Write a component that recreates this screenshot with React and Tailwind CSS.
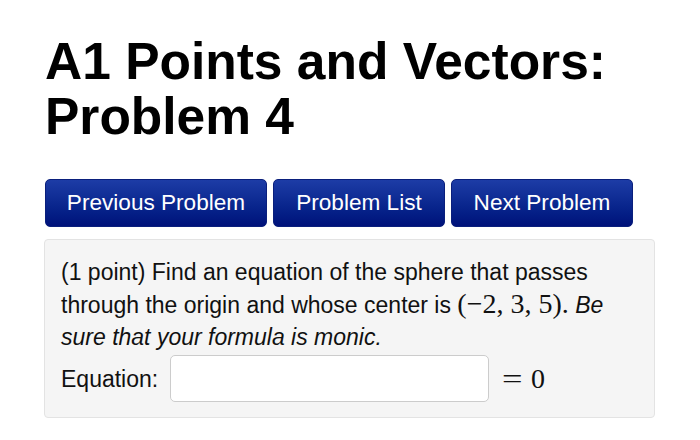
import React from "react";

const sans = { fontFamily: '"Liberation Sans", Arial, sans-serif' };
const serif = { fontFamily: '"Liberation Serif", "Times New Roman", serif' };

function NavButton({ width, children }) {
  return (
    <button
      className={`${width} h-[48px] rounded-[5px] border border-[#0a1f7c] bg-gradient-to-b from-[#1d3ca6] to-[#00117a] text-white text-[22.6px] leading-none`}
    >
      {children}
    </button>
  );
}

function App() {
  return (
    <div className="w-[700px] h-[440px] bg-white text-black overflow-hidden" style={sans}>
      <div className="pl-[45px] pr-[45px] pt-[34px]">
        <h1 className="font-bold text-[51.5px] leading-[55px]">
          A1 Points and Vectors:
          <br />
          Problem 4
        </h1>

        <div className="flex gap-[6px] mt-[35px]">
          <NavButton width="w-[222px]">Previous Problem</NavButton>
          <NavButton width="w-[172px]">Problem List</NavButton>
          <NavButton width="w-[182px]">Next Problem</NavButton>
        </div>

        <div className="mt-[12px] w-[611px] ml-[-1px] bg-[#f5f5f5] border border-[#e3e3e3] rounded-[4px] pl-[16px] pr-[14px] pt-[16px] pb-[15px] text-[23px] leading-[32px] text-[#111]">
          <p>
            (1 point) Find an equation of the sphere that passes
            <br />
            through the origin and whose center is{" "}
            <span className="text-[28px]" style={serif}>
              (−2,&nbsp;3,&nbsp;5)
            </span>
            <span className="text-[28px]" style={serif}>.</span>{" "}
            <em>Be</em>
            <br />
            <em>sure that your formula is monic.</em>
          </p>
          <div className="flex items-center mt-[2px]">
            <span>Equation:</span>
            <input
              type="text"
              className="ml-[12px] w-[319px] h-[47px] bg-white border border-[#cccccc] rounded-[5px] outline-none"
            />
            <span className="ml-[13px] text-[28px] leading-none" style={serif}>
              <span className="inline-block scale-x-[1.3] origin-left">=</span>
              <span className="ml-[13px]">0</span>
            </span>
          </div>
        </div>
      </div>
    </div>
  );
}

export default App;
